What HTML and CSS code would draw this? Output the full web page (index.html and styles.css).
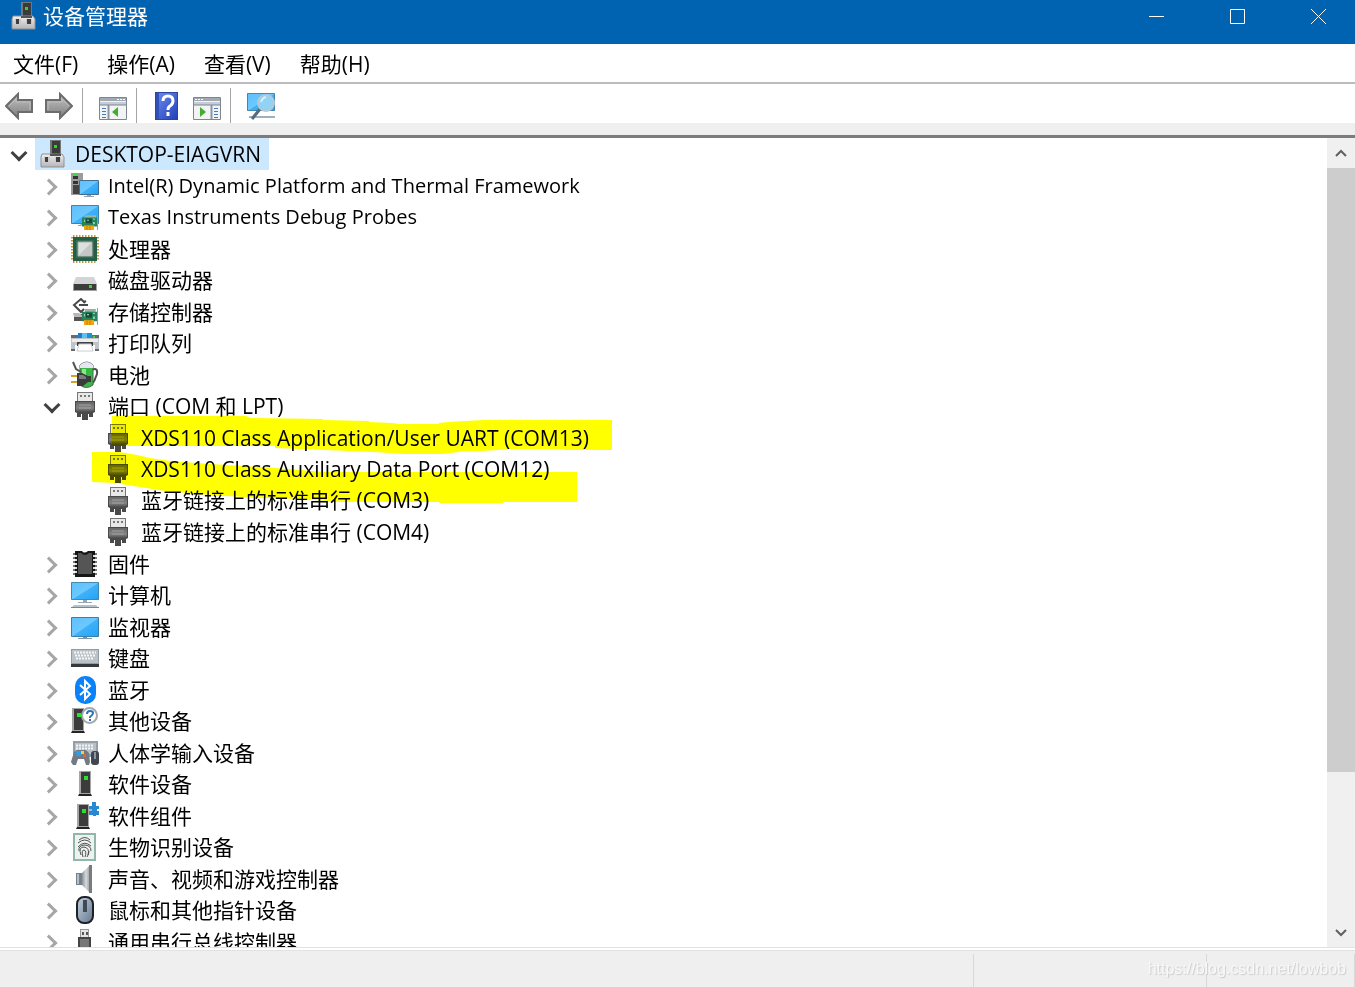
FILE: index.html
```
<!DOCTYPE html>
<html lang="zh-CN">
<head>
<meta charset="utf-8">
<title>设备管理器</title>
<link rel="stylesheet" href="styles.css">
</head>
<body>
<svg class="defs" aria-hidden="true">
  <defs>
    <linearGradient id="g-screen" x1="0" y1="0" x2="1" y2="1"><stop offset="0" stop-color="#5fc0fb"/><stop offset=".5" stop-color="#6cc8ff"/><stop offset=".52" stop-color="#3fb2f8"/><stop offset="1" stop-color="#22a2f8"/></linearGradient>
    <linearGradient id="g-metal" x1="0" y1="0" x2="0" y2="1"><stop offset="0" stop-color="#efefef"/><stop offset="1" stop-color="#b5b5b8"/></linearGradient>
    <linearGradient id="g-plug" x1="0" y1="0" x2="0" y2="1"><stop offset="0" stop-color="#666"/><stop offset=".6" stop-color="#858585"/><stop offset="1" stop-color="#4c4c4c"/></linearGradient>
    <linearGradient id="g-arrow" x1="0" y1="0" x2="0" y2="1"><stop offset="0" stop-color="#c4c4c4"/><stop offset="1" stop-color="#7d7d7d"/></linearGradient>
    <linearGradient id="g-help" x1="0" y1="0" x2="1" y2="1"><stop offset="0" stop-color="#6a8cf0"/><stop offset="1" stop-color="#2440b8"/></linearGradient>
    <linearGradient id="g-mouse" x1="0" y1="0" x2="1" y2="1"><stop offset="0" stop-color="#c3d1e0"/><stop offset="1" stop-color="#64788f"/></linearGradient>
    <linearGradient id="g-cone" x1="0" y1="0" x2="1" y2="0"><stop offset="0" stop-color="#8b8f94"/><stop offset=".5" stop-color="#d8dadc"/><stop offset="1" stop-color="#989ca0"/></linearGradient>
  </defs>

  <symbol id="i-root" viewBox="0 0 28 28">
    <path d="M12 0h11v16H12z" fill="#777"/><path d="M14 1h8v14h-8z" fill="#3b3b3b"/><path d="M16 5h3v3h-3z" fill="#2bd62b"/>
    <path d="M4 14h20l2 3v10H3V17z" fill="url(#g-metal)" stroke="#909094"/><path d="M12 14h11v2H12z" fill="#555"/>
    <path d="M6 17h6v6H6zM17 17h6v6h-6z" fill="#c9c9c9"/><path d="M7 17h3v5H7zM18 17h4v5h-4z" fill="#3f3f3f"/>
  </symbol>
  <symbol id="i-screen" viewBox="0 0 28 20" preserveAspectRatio="none">
    <path d="M.5.5h27v19H.5z" fill="url(#g-screen)" stroke="#3a7fa8"/>
  </symbol>
  <symbol id="i-card" viewBox="0 0 18 14" preserveAspectRatio="none">
    <path d="M1 3h3V1h10v2h3v8H1z" fill="#26835b"/><path d="M4 1h11v2H4z" fill="#9fb4ab"/><path d="M5 4h6v4H5z" fill="#174d38"/><path d="M3 5h1v2H3zM12 4h2v1h-2zM12 7h2v2h-2zM6 5h2v1H6z" fill="#8fd0a8"/>
    <path d="M3 10h10v4H3z" fill="#f0a70c"/><path d="M6 10v4M9 10v4" stroke="#ca7e08"/><path d="M16 0h1v14h-1z" fill="#9a9a9a"/>
  </symbol>
  <symbol id="i-tower" viewBox="0 0 14 26">
    <path d="M1 0h12v23H1z" fill="#a5a5a5"/><path d="M3 1h9v21H3z" fill="#3c3c3c"/><path d="M6 5h4v4H6z" fill="#29e22c"/><path d="M1 23h12l1 2H0z" fill="#242424"/>
  </symbol>
  <symbol id="i-pc" viewBox="0 0 28 28">
    <path d="M0 1h12v22H0z" fill="#9c9c9c"/><path d="M2 4h5v3H2zM2 9h5v3H2z" fill="#333"/><path d="M2 13h6v9H2z" fill="#444"/><path d="M3 2h3v1H3z" fill="#3bd33b"/>
    <path d="M8.500 8.500h19v14h-19z" fill="url(#g-screen)" stroke="#426f91"/><path d="M16 23h4v1h3v1H13v-1h3z" fill="#8fa5b5"/>
  </symbol>
  <symbol id="i-probe" viewBox="0 0 28 28">
    <use href="#i-screen" x="0" y="2" width="28" height="19"/><path d="M9 21h3v1H7v1h4z" fill="#94a5b0"/><use href="#i-card" x="10" y="11" width="18" height="16"/>
  </symbol>
  <symbol id="i-cpu" viewBox="0 0 28 28">
    <path d="M2 1h24M2 27h24M1 2v24M27 2v24" stroke="#c29749" stroke-width="2" stroke-dasharray="1.500 1.500"/><path d="M2 2h24v24H2z" fill="#1f6249"/><path d="M4.500 4.500h19v19h-19z" fill="#366f55" stroke="#2a5945"/><path d="M7 7h14v14H7z" fill="#dce0df" stroke="#a5aea9"/><path d="M8 20L20 8v12z" fill="#c4c7c6"/>
  </symbol>
  <symbol id="i-disk" viewBox="0 0 28 28">
    <path d="M5 11h18l3 7H2z" fill="#d2d4d6"/><path d="M2 18h24v7H2z" fill="#a0a0a0"/><path d="M3 18h22v6H3z" fill="#3c3c3c"/><path d="M18 19h3v3h-3z" fill="#2add2c"/>
  </symbol>
  <symbol id="i-storage" viewBox="0 0 28 28">
    <path d="M3 16h8v7H3z" fill="#555"/><path d="M2 15h6l5 4H3z" fill="#b8b8b8"/><path d="M14 5L10 1 3 7l7 7 3-3M8 7h9M13 4l2-1" fill="none" stroke="#484848" stroke-width="2"/><use href="#i-card" x="10" y="10" width="18" height="17"/>
  </symbol>
  <symbol id="i-printer" viewBox="0 0 28 28">
    <path d="M0 6h28v5H0z" fill="#686b70"/><path d="M0 9h28v13h-4v-6H4v6H0z" fill="#c1c4c8"/><path d="M1 10h26v3H1z" fill="#eceded"/><path d="M7 4h14v5H7z" fill="#58c3ef"/><path d="M7 4h4v5H7z" fill="#187fd3"/><path d="M16 4h5v5h-5z" fill="#1697d3"/><path d="M22 7h2v2h-2z" fill="#36dc3b"/><path d="M6 13h16v4H6z" fill="#404246"/><path d="M8 15h12l2 7H6z" fill="#fff" stroke="#ccc"/><path d="M0 20h4v2H0zM24 20h4v2h-4z" fill="#66696d"/>
  </symbol>
  <symbol id="i-battery" viewBox="0 0 28 28">
    <path d="M21 9q6-3 5 4l-2 5q-1 4-5 5" fill="none" stroke="#4b504a" stroke-width="2"/><path d="M9 4q7-6 13 0v20q-7 5-13 0z" fill="#38b744" stroke="#4b664c"/><path d="M9 4q7-6 13 0v3H9z" fill="#e8e4f5"/><path d="M11 8h4v10h-4z" fill="#8be786"/><path d="M2 1l3 7 5 3" fill="none" stroke="#555" stroke-width="2"/><path d="M0 15h7M0 21h7" stroke="#d4a02d" stroke-width="2"/><path d="M6 12h5l6 3h3v6h-3l-5 4H6z" fill="#393b3d"/><path d="M8 14h4l3 2v2H8z" fill="#797c7e"/>
  </symbol>
  <symbol id="i-port" viewBox="0 0 28 28">
    <path d="M6 0h16v10H6z" fill="#777"/><path d="M7 1h14v8H7z" fill="#e8e8e8"/><path d="M9 3h2v2H9zM13 3h2v2h-2zM17 3h2v2h-2z" fill="#777"/><path d="M4 9h20v11l-2 1v4h-4v-3h-1v6h-6v-6h-1v3H6v-4l-2-1z" fill="#4a4a4a"/><path d="M5 10h18v9l-2 1H7l-2-1z" fill="url(#g-plug)"/><path d="M8 13h12M8 16h12" stroke="#a3a3a3"/>
  </symbol>
  <symbol id="i-firmware" viewBox="0 0 28 28">
    <path d="M3 3v22M25 3v22" stroke="#777" stroke-width="2" stroke-dasharray="2 2"/><path d="M4 1h7q2 3 6 0h7v26H4z" fill="#171717"/><path d="M7 3h3q4 4 8 0h3v21H7z" fill="#555"/><path d="M4 5h2v2H4zm0 4h2v2H4zm0 4h2v2H4zm0 4h2v2H4zm0 4h2v2H4zM22 5h2v2h-2zm0 4h2v2h-2zm0 4h2v2h-2zm0 4h2v2h-2zm0 4h2v2h-2z" fill="#ddd"/>
  </symbol>
  <symbol id="i-computer" viewBox="0 0 28 28">
    <use href="#i-screen" y="1" width="28" height="18"/><path d="M12 19h4v2h5v1H7v-1h5z" fill="#98a8b4"/><path d="M3 24h22l3 3H0z" fill="#b4c2cc"/><path d="M0 26h28v1H0z" fill="#71899a"/>
  </symbol>
  <symbol id="i-monitor" viewBox="0 0 28 28">
    <use href="#i-screen" y="4" width="28" height="20"/><path d="M12 24h4v1h5v1H7v-1h5z" fill="#8295a3"/>
  </symbol>
  <symbol id="i-keyboard" viewBox="0 0 28 28">
    <path d="M0 5h28v18H0z" fill="#939ca5"/><path d="M1 6h26v13H1z" fill="#bac1c7"/><path d="M3 8.500h22M4 11.500h20M5 14.500h18" stroke="#f7f7f7" stroke-width="2" stroke-dasharray="2 1"/><path d="M0 20h28v3H0z" fill="#34393d"/>
  </symbol>
  <symbol id="i-bluetooth" viewBox="0 0 28 28">
    <rect x="4" y="0" width="21" height="28" rx="10" fill="#0a82fa"/><path d="M9 9l10 9-5 5V5l5 5-10 9" fill="none" stroke="#fff" stroke-width="2"/>
  </symbol>
  <symbol id="i-unknown" viewBox="0 0 28 28">
    <use href="#i-tower" y="1" width="14" height="26"/><circle cx="18.500" cy="8.500" r="7.500" fill="#fff" stroke="#a2a8ae" stroke-width="2"/><path d="M16 7q0-3 3-3t3 2q0 2-3 4v1M19 12v2" fill="none" stroke="#2872bd" stroke-width="2"/>
  </symbol>
  <symbol id="i-hid" viewBox="0 0 28 28">
    <path d="M2 2h25v16H2z" fill="#969fa8"/><path d="M4 4h21v11H4z" fill="#b9c1c8"/><path d="M5 6.500h18M5 9.500h18" stroke="#f5f5f5" stroke-width="2" stroke-dasharray="2 1"/><path d="M3 13l3-2h9l3 3 1 9-1 3h-3l-2-6H7l-2 6H2l-2-3z" fill="#727a82"/><path d="M5 12h5v5H5z" fill="#309ce6"/><path d="M10 12h3v3h-3z" fill="#f2d138"/><path d="M12 15h3v3h-3z" fill="#e86332"/><rect x="20" y="12" width="8" height="14" rx="3" fill="#41474e"/><path d="M23 13h2v7h-2z" fill="#8797a6"/>
  </symbol>
  <symbol id="i-software" viewBox="0 0 28 28"><use href="#i-tower" x="7" y="1" width="14" height="26"/></symbol>
  <symbol id="i-component" viewBox="0 0 28 28">
    <use href="#i-tower" x="5" y="2" width="14" height="26"/><path d="M18 4h3V0h4v4h3v3h-2v2h2v4h-3v1h-3v-1h-4z" fill="#2889d2"/><path d="M18 7h3v2h-3z" fill="#8ac0ea"/>
  </symbol>
  <symbol id="i-finger" viewBox="0 0 28 28">
    <path d="M3 1h21v26H3z" fill="#edf2f1" stroke="#91b7ac" stroke-width="2"/><path d="M8 7q6-5 11 0M7 10q7-6 13 0M7 14q6-7 13-1M8 18q-1-5 5-6 7 0 7 6M10 22q-3-8 3-8 6 1 4 8M12 24q-2-7 1-7 3 1 1 7M16 24q2-3 2-6" fill="none" stroke="#4d5150"/>
  </symbol>
  <symbol id="i-sound" viewBox="0 0 28 28">
    <path d="M5 8h6v12H5z" fill="#74818d"/><path d="M11 8l8-8v28l-8-8z" fill="url(#g-cone)"/><path d="M18 0h3v28h-3z" fill="#777c81"/><path d="M6 9h2v10H6z" fill="#b4bfc9"/>
  </symbol>
  <symbol id="i-mouse" viewBox="0 0 28 28">
    <rect x="6" y="1" width="16" height="26" rx="7" fill="url(#g-mouse)" stroke="#1e2226" stroke-width="2"/><path d="M12 4h4v12h-4z" fill="#404a54"/>
  </symbol>
  <symbol id="i-usb" viewBox="0 0 28 28">
    <path d="M9 1h9v9H9z" fill="#969696"/><path d="M10 2h7v7h-7z" fill="#e4e4e4"/><path d="M11 4h2v3h-2zM15 4h2v3h-2z" fill="#555"/><path d="M7 9h13v15l-4 4h-5l-4-4z" fill="#444"/><path d="M9 11h9v11H9z" fill="#777"/>
  </symbol>
  <symbol id="i-pane" viewBox="0 0 28 28">
    <path d="M.5 5.500h27v22H.5z" fill="#f2f3f4" stroke="#7c8793"/><path d="M1 6h26v3H1z" fill="#a0a9b4"/><path d="M18 7h2v1h-2zM21 7h2v1h-2zM24 7h2v1h-2z" fill="#fff"/><path d="M1 10h26v3H1z" fill="#c6ccd3"/><path d="M0 13h28" stroke="#7c8793"/><path d="M9.500 13v14" stroke="#8d96a0" stroke-width="2"/><path d="M3 16.500h4M3 19.500h4M3 22.500h4M3 25.500h4" stroke="#3f7fc1"/>
  </symbol>
  <symbol id="i-arrow" viewBox="0 0 28 26"><path d="M1 13L13 1v6h14v12H13v6z" fill="url(#g-arrow)" stroke="#6c6c6c" stroke-width="2"/><path d="M4 13l7-7v3h14v8" fill="none" stroke="#bcbcbc"/></symbol>
</svg>

<header class="titlebar">
  <svg class="icon"><use href="#i-root"/></svg>
  <h1 class="title">设备管理器</h1>
  <div class="controls">
    <button class="control" aria-label="最小化"><svg width="15" height="15"><path d="M0 7.500h15" stroke="#fff"/></svg></button>
    <button class="control" aria-label="最大化"><svg width="15" height="15"><path d="M.5.5h14v14H.5z" fill="none" stroke="#fff"/></svg></button>
    <button class="control" aria-label="关闭"><svg width="15" height="15"><path d="M0 0l15 15M15 0L0 15" stroke="#fff"/></svg></button>
  </div>
</header>

<nav class="menu">
  <button>文件<span class="en">(F)</span></button>
  <button>操作<span class="en">(A)</span></button>
  <button>查看<span class="en">(V)</span></button>
  <button>帮助<span class="en">(H)</span></button>
</nav>

<div class="toolbar" role="toolbar">
  <div class="group">
    <button aria-label="后退"><svg class="icon"><use href="#i-arrow"/></svg></button>
    <button aria-label="前进"><svg class="icon flip"><use href="#i-arrow"/></svg></button>
  </div>
  <div class="group wide">
    <button aria-label="显示控制台树"><svg class="icon" viewBox="0 0 28 28"><use href="#i-pane"/><path d="M19 15v10l-6-5z" fill="#43ad30"/></svg></button>
  </div>
  <div class="group wide">
    <button aria-label="帮助"><svg class="icon" viewBox="0 0 28 28"><path d="M2 0h23v28H2z" fill="#2a469f"/><path d="M3 1h21v26H3z" fill="url(#g-help)"/><path d="M3 1h3v26H3z" fill="#3150b8"/><path d="M10 9q0-5 5-5t5 5q0 3-3 5-2 1-2 4M15 20v4" fill="none" stroke="#fff" stroke-width="3"/></svg></button>
    <button aria-label="显示操作窗格"><svg class="icon" viewBox="0 0 28 28"><g transform="matrix(-1 0 0 1 28 0)"><use href="#i-pane"/></g><path d="M7 15v10l6-5z" fill="#43ad30"/></svg></button>
  </div>
  <div class="group wide">
    <button aria-label="扫描检测硬件改动"><svg class="icon" viewBox="0 0 28 28"><use href="#i-screen" y="1" width="28" height="18"/><path d="M2 24h26v2H2z" fill="#9fb1bc"/><path d="M13 17l-8 10" stroke="#536b7a" stroke-width="3"/><circle cx="19" cy="11" r="8" fill="#91d2f5" stroke="#b4c9d5" stroke-width="2"/><path d="M14 10q1-4 5-5" fill="none" stroke="#d6f1ff" stroke-width="2"/></svg></button>
  </div>
</div>

<main class="pane">
  <ul class="tree" role="tree">
    <li class="node root"><button class="toggle open" aria-label="折叠"></button><span class="item"><svg class="icon"><use href="#i-root"/></svg><span class="en">DESKTOP-EIAGVRN</span></span></li>
    <li class="node"><button class="toggle" aria-label="展开"></button><span class="item"><svg class="icon"><use href="#i-pc"/></svg><span class="en prose">Intel(R) Dynamic Platform and Thermal Framework</span></span></li>
    <li class="node"><button class="toggle" aria-label="展开"></button><span class="item"><svg class="icon"><use href="#i-probe"/></svg><span class="en prose">Texas Instruments Debug Probes</span></span></li>
    <li class="node"><button class="toggle" aria-label="展开"></button><span class="item"><svg class="icon"><use href="#i-cpu"/></svg><span class="zh">处理器</span></span></li>
    <li class="node"><button class="toggle" aria-label="展开"></button><span class="item"><svg class="icon"><use href="#i-disk"/></svg><span class="zh">磁盘驱动器</span></span></li>
    <li class="node"><button class="toggle" aria-label="展开"></button><span class="item"><svg class="icon"><use href="#i-storage"/></svg><span class="zh">存储控制器</span></span></li>
    <li class="node"><button class="toggle" aria-label="展开"></button><span class="item"><svg class="icon"><use href="#i-printer"/></svg><span class="zh">打印队列</span></span></li>
    <li class="node"><button class="toggle" aria-label="展开"></button><span class="item"><svg class="icon"><use href="#i-battery"/></svg><span class="zh">电池</span></span></li>
    <li class="node"><button class="toggle open" aria-label="折叠"></button><span class="item"><svg class="icon"><use href="#i-port"/></svg><span class="zh">端口<span class="en"> (COM </span>和<span class="en"> LPT)</span></span></span></li>
    <li class="node leaf"><span class="item"><svg class="icon"><use href="#i-port"/></svg><span class="en">XDS110 Class Application/User UART (COM13)</span></span></li>
    <li class="node leaf"><span class="item"><svg class="icon"><use href="#i-port"/></svg><span class="en">XDS110 Class Auxiliary Data Port (COM12)</span></span></li>
    <li class="node leaf"><span class="item"><svg class="icon"><use href="#i-port"/></svg><span class="zh">蓝牙链接上的标准串行<span class="en"> (COM3)</span></span></span></li>
    <li class="node leaf"><span class="item"><svg class="icon"><use href="#i-port"/></svg><span class="zh">蓝牙链接上的标准串行<span class="en"> (COM4)</span></span></span></li>
    <li class="node"><button class="toggle" aria-label="展开"></button><span class="item"><svg class="icon"><use href="#i-firmware"/></svg><span class="zh">固件</span></span></li>
    <li class="node"><button class="toggle" aria-label="展开"></button><span class="item"><svg class="icon"><use href="#i-computer"/></svg><span class="zh">计算机</span></span></li>
    <li class="node"><button class="toggle" aria-label="展开"></button><span class="item"><svg class="icon"><use href="#i-monitor"/></svg><span class="zh">监视器</span></span></li>
    <li class="node"><button class="toggle" aria-label="展开"></button><span class="item"><svg class="icon"><use href="#i-keyboard"/></svg><span class="zh">键盘</span></span></li>
    <li class="node"><button class="toggle" aria-label="展开"></button><span class="item"><svg class="icon"><use href="#i-bluetooth"/></svg><span class="zh">蓝牙</span></span></li>
    <li class="node"><button class="toggle" aria-label="展开"></button><span class="item"><svg class="icon"><use href="#i-unknown"/></svg><span class="zh">其他设备</span></span></li>
    <li class="node"><button class="toggle" aria-label="展开"></button><span class="item"><svg class="icon"><use href="#i-hid"/></svg><span class="zh">人体学输入设备</span></span></li>
    <li class="node"><button class="toggle" aria-label="展开"></button><span class="item"><svg class="icon"><use href="#i-software"/></svg><span class="zh">软件设备</span></span></li>
    <li class="node"><button class="toggle" aria-label="展开"></button><span class="item"><svg class="icon"><use href="#i-component"/></svg><span class="zh">软件组件</span></span></li>
    <li class="node"><button class="toggle" aria-label="展开"></button><span class="item"><svg class="icon"><use href="#i-finger"/></svg><span class="zh">生物识别设备</span></span></li>
    <li class="node"><button class="toggle" aria-label="展开"></button><span class="item"><svg class="icon"><use href="#i-sound"/></svg><span class="zh">声音、视频和游戏控制器</span></span></li>
    <li class="node"><button class="toggle" aria-label="展开"></button><span class="item"><svg class="icon"><use href="#i-mouse"/></svg><span class="zh">鼠标和其他指针设备</span></span></li>
    <li class="node"><button class="toggle" aria-label="展开"></button><span class="item"><svg class="icon"><use href="#i-usb"/></svg><span class="zh">通用串行总线控制器</span></span></li>
  </ul>
  <svg class="marker" viewBox="92 416 520 87" aria-hidden="true">
    <path d="M112 416H246L251 418L323 419V420L369 421V422L392 423L400 424H439V423L448 422L465 421L484 420H612V450H564V449H513L482 451H466L443 454H404L375 452L325 450L275 448V446H112Z"/>
    <path d="M92 452H120L137 455L150 458L170 461L210 464L262 467L300 470L323 472H577V502H503V503H439V502H340L300 499L262 498L210 495L165 491L140 487L115 483L92 482Z"/>
  </svg>
  <div class="scrollbar">
    <button class="scroll-step" aria-label="向上滚动"><svg width="12" height="9"><path d="M1 7l5-5 5 5" fill="none" stroke="#606060" stroke-width="2"/></svg></button>
    <div class="track"><div class="thumb"></div></div>
    <button class="scroll-step" aria-label="向下滚动"><svg width="12" height="9"><path d="M1 2l5 5 5-5" fill="none" stroke="#606060" stroke-width="2"/></svg></button>
  </div>
</main>

<footer class="status">
  <div class="cell"></div>
  <div class="cell"></div>
  <div class="cell"></div>
  <span class="watermark">https://blog.csdn.net/lowbob</span>
</footer>
</body>
</html>
```

FILE: styles.css
```
* { box-sizing: border-box; }

body {
  margin: 0;
  height: 100vh;
  display: flex;
  flex-direction: column;
  overflow: hidden;
  background: #fff;
  color: #000;
  font: 21px/30px "Noto Sans CJK SC", sans-serif;
}

button {
  margin: 0;
  padding: 0;
  border: 0;
  background: none;
  color: inherit;
  font: inherit;
}

svg { display: block; }

.defs { position: absolute; width: 0; height: 0; }

.icon { width: 28px; height: 28px; flex: none; }

.flip { transform: scaleX(-1); }

.en {
  font-family: "Open Sans", "Noto Sans", sans-serif;
  font-size: 21px;
  white-space: pre;
}

.prose { font-size: 20px; }

.zh { padding-bottom: 2px; }

.titlebar {
  display: flex;
  flex: none;
  align-items: flex-start;
  gap: 6px;
  height: 44px;
  padding: 2px 0 0 9px;
  background: #0063b1;
  color: #fff;
}

.title { margin: 0; font-size: 21px; font-weight: 400; line-height: 26px; }

.controls { display: flex; margin-left: auto; }

.control {
  display: grid;
  place-items: center;
  width: 81px;
  height: 29px;
  padding-left: 7px;
}

.menu {
  display: flex;
  flex: none;
  align-items: flex-start;
  gap: 29px;
  height: 40px;
  padding: 4px 13px;
  border-bottom: 2px solid #bcbcbe;
  line-height: 30px;
}

.toolbar {
  display: flex;
  flex: none;
  height: 40px;
  padding: 4px 0 1px 5px;
}

.group {
  display: flex;
  align-items: center;
  gap: 12px;
  padding-right: 9px;
}

.group + .group { border-left: 1px solid #a6a6a6; }

.wide { padding-left: 16px; }

.pane {
  position: relative;
  display: flex;
  flex: 1;
  min-height: 0;
  margin-top: 11px;
  border-top: 3px solid #7c7c7c;
  overflow: hidden;
  background: #fff;
  outline: 12px solid #efefef;
}

.tree {
  display: grid;
  flex: 1;
  grid-template-rows: repeat(13, 32px 31px);
  margin: 0;
  padding: 0;
  list-style: none;
  overflow: hidden;
}

.node { display: flex; align-items: center; padding-left: 33px; }

.root { padding-left: 0; }

.leaf { padding-left: 104px; }

.item { display: flex; align-items: center; gap: 9px; white-space: nowrap; }

.root .item {
  margin-left: -3px;
  padding: 1px 8px 1px 3px;
  background: #cce8ff;
}

.toggle {
  display: grid;
  place-items: center;
  width: 38px;
  height: 28px;
  padding: 2px 6px 0 0;
}

.toggle::before {
  content: "";
  width: 9px;
  height: 9px;
  border: solid #a6a6a6;
  border-width: 3px 3px 0 0;
  transform: rotate(45deg);
}

.toggle.open { padding: 0 1px 2px 0; }

.open::before {
  border-color: #404040;
  transform: rotate(135deg);
}

.marker {
  position: absolute;
  left: 92px;
  top: 278px;
  width: 520px;
  height: 87px;
  fill: #ff0;
  mix-blend-mode: multiply;
}

.scrollbar {
  display: flex;
  flex: none;
  flex-direction: column;
  width: 28px;
  background: #f0f0f0;
}

.scroll-step {
  display: grid;
  place-items: center;
  height: 30px;
  padding-right: 1px;
}

.track {
  display: grid;
  flex: 1;
  grid-template-rows: 604fr 145fr;
}

.thumb { background: #cdcdcd; }

.status {
  position: relative;
  display: grid;
  flex: none;
  grid-template-columns: 974fr 233fr 148fr;
  height: 40px;
  padding-top: 6px;
  border-top: 1px solid #e2e2e2;
  background: #efefef;
  box-shadow: inset 0 2px #fff, inset 0 3px #e2e2e2;
}

.cell { border-right: 1px solid #d8d8d8; }

.watermark {
  position: absolute;
  right: 9px;
  bottom: 8px;
  color: #f8f8f8;
  font: 16px/20px "Liberation Sans", sans-serif;
  text-shadow: 1px 1px 1px #ccc;
}
```
